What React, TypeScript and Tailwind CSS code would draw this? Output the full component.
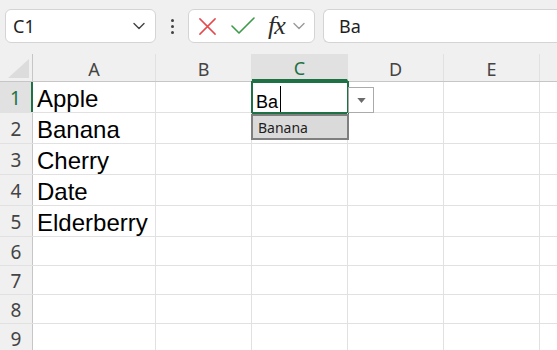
import type { FC, ReactNode } from 'react'

const cols = [
  { key: 'A', w: 'w-[123px]' },
  { key: 'B', w: 'w-[96px]' },
  { key: 'C', w: 'w-[96px]' },
  { key: 'D', w: 'w-[96px]' },
  { key: 'E', w: 'w-[96px]' },
]

const rows = [
  { n: 1, h: 'h-[31px]', a: 'Apple' },
  { n: 2, h: 'h-[31px]', a: 'Banana' },
  { n: 3, h: 'h-[31px]', a: 'Cherry' },
  { n: 4, h: 'h-[31px]', a: 'Date' },
  { n: 5, h: 'h-[31px]', a: 'Elderberry' },
  { n: 6, h: 'h-[29px]', a: '' },
  { n: 7, h: 'h-[29px]', a: '' },
  { n: 8, h: 'h-[29px]', a: '' },
  { n: 9, h: 'h-[29px]', a: '' },
]

const uiFont = 'font-["Noto_Sans","Open_Sans",sans-serif]'
const cellFont = 'font-["Liberation_Sans",Arial,sans-serif]'

const Chevron: FC<{ className?: string }> = ({ className }) => (
  <svg viewBox="0 0 16 16" className={className} fill="none" stroke="currentColor" strokeWidth="1.4" strokeLinecap="round" strokeLinejoin="round">
    <path d="M3 5.5 8 10.5 13 5.5" />
  </svg>
)

/** Active cell C1 with the in-cell editor, dropdown arrow and autocomplete list */
const ActiveCell: FC = () => (
  <>
    <div className="absolute -left-px -top-px w-[98px] h-[33px] border-2 border-[#1e7145] bg-white flex items-end pl-[3px] pb-[1px]">
      <span className={`${cellFont} text-[18px] leading-none text-black`}>Ba</span>
      <span className="w-px h-[26px] bg-black ml-[2px] mb-[-1px]" />
    </div>
    <div className="absolute left-[96px] top-[5px] w-[26px] h-[26px] bg-white border border-[#ababab] flex items-center justify-center">
      <svg viewBox="0 0 10 6" className="w-[9px] h-[5px]">
        <path d="M0 0h10L5 6z" fill="#6b6b6b" />
      </svg>
    </div>
    <div className="absolute -left-px top-[32px] w-[98px] h-[26px] bg-[#dadada] border-2 border-[#7f7f7f] flex items-center pl-[5px] z-10">
      <span className={`${uiFont} text-[14px] text-[#1e1e1e]`}>Banana</span>
    </div>
  </>
)

const Cell: FC<{ w: string, children?: ReactNode, className?: string }> = ({ w, children, className = '' }) => (
  <div className={`${w} shrink-0 h-full border-r border-[#e1e1e1] relative ${className}`}>{children}</div>
)

const App: FC = () => {
  return (
    <div className="w-[557px] h-[350px] overflow-hidden bg-[#f0f0f0] flex flex-col">
      {/* Formula bar */}
      <div className="flex items-center h-[54px] pl-[5px] pb-[2px] shrink-0">
        <div className="w-[151px] h-[34px] bg-white border border-[#d4d4d4] rounded-[6px] flex items-center pl-[7px] pr-[8px]">
          <span className={`${uiFont} text-[18px] text-[#1f1f1f] flex-1`}>C1</span>
          <Chevron className="w-[16px] h-[16px] text-[#424242]" />
        </div>
        <div className="w-[32px] flex flex-col items-center gap-[3px]">
          <span className="size-[3px] rounded-full bg-[#424242]" />
          <span className="size-[3px] rounded-full bg-[#424242]" />
          <span className="size-[3px] rounded-full bg-[#424242]" />
        </div>
        <div className="w-[127px] h-[34px] bg-white border border-[#d4d4d4] rounded-[6px] flex items-center pl-[9px]">
          <svg viewBox="0 0 20 20" className="w-[19px] h-[19px]" fill="none" stroke="#e5484d" strokeWidth="1.6" strokeLinecap="round">
            <path d="M2 2 18 18M18 2 2 18" />
          </svg>
          <svg viewBox="0 0 24 18" className="w-[24px] h-[18px] ml-[14px]" fill="none" stroke="#3a9c48" strokeWidth="1.6" strokeLinecap="round" strokeLinejoin="round">
            <path d="M1 9 8 16 23 1" />
          </svg>
          <span className="ml-[13px] font-['Liberation_Serif',serif] italic text-[26px] leading-none text-[#2b2b2b] tracking-[-1px]">fx</span>
          <Chevron className="w-[16px] h-[16px] text-[#9a9a9a] ml-[6px]" />
        </div>
        <div className="ml-[8px] flex-1 h-[34px] bg-white border border-[#d4d4d4] border-r-0 rounded-l-[6px] flex items-center pl-[15px]">
          <span className={`${uiFont} text-[18px] text-[#1f1f1f]`}>Ba</span>
        </div>
      </div>

      {/* Grid */}
      <div className="flex-1 flex flex-col">
        {/* Column headers */}
        <div className="flex h-[28px] shrink-0 border-b border-[#c6c6c6]">
          <div className="w-[33px] shrink-0 h-full border-r border-[#c6c6c6] flex items-end justify-end pr-[3px] pb-[3px]">
            <svg viewBox="0 0 21 19" className="w-[21px] h-[19px]">
              <path d="M21 0V19H0z" fill="#dcdcdc" />
            </svg>
          </div>
          {cols.map(c => (
            <Cell
              key={c.key}
              w={c.w}
              className={`flex items-center justify-center pt-[3px] ${c.key === 'C' ? 'bg-[#e1e1e1] border-b-2 border-b-[#1e7145]' : ''}`}
            >
              <span className={`${uiFont} text-[18px] leading-none ${c.key === 'C' ? 'text-[#1e7145]' : 'text-[#444]'}`}>{c.key}</span>
            </Cell>
          ))}
          <Cell w="flex-1" className="border-r-0" />
        </div>

        {rows.map(r => (
          <div key={r.n} className={`flex ${r.h} shrink-0 border-b border-[#e1e1e1] bg-white`}>
            <div
              className={`w-[33px] shrink-0 h-full flex items-center justify-center pt-[3px] ${r.n === 1 ? 'bg-[#e1e1e1] border-r-2 border-[#1e7145]' : 'bg-[#f0f0f0] border-r border-[#c6c6c6]'}`}
            >
              <span className={`${uiFont} text-[19px] leading-none ${r.n === 1 ? 'text-[#1e7145]' : 'text-[#444]'}`}>{r.n}</span>
            </div>
            {cols.map(c => (
              <Cell key={c.key} w={c.w} className={c.key === 'A' ? 'flex items-end pl-[4px] pb-[1px]' : ''}>
                {c.key === 'A' && r.a && (
                  <span className={`${cellFont} text-[24px] leading-none text-black whitespace-nowrap`}>{r.a}</span>
                )}
                {c.key === 'C' && r.n === 1 && <ActiveCell />}
              </Cell>
            ))}
            <Cell w="flex-1" className="border-r-0" />
          </div>
        ))}
      </div>
    </div>
  )
}

export default App
